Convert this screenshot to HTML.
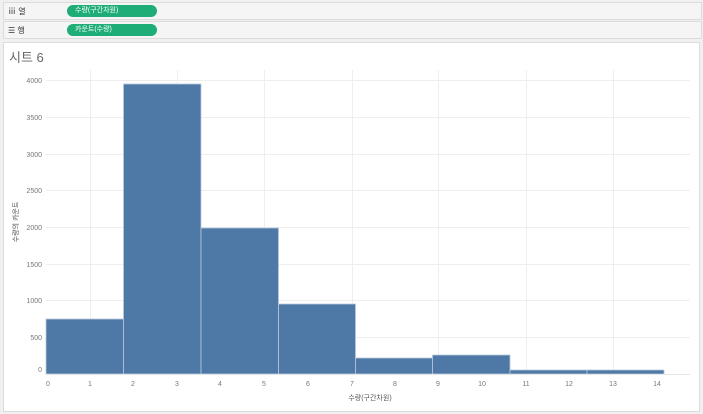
<!DOCTYPE html>
<html><head><meta charset="utf-8"><style>
body{margin:0;width:703px;height:414px;background:#f0f0f0;font-family:"Liberation Sans","Noto Sans CJK KR",sans-serif;overflow:hidden;position:relative}
.shelf{position:absolute;left:3px;width:697px;height:16px;background:#f5f5f5;border:1px solid #dcdcdc}
.lab{position:absolute;left:4px;top:3px;font-size:8px;color:#333}
.pill{position:absolute;left:63px;top:2px;width:90px;height:12px;background:#1fad77;border-radius:7px;color:#fff;font-size:7px;line-height:12px;padding-left:8px;box-sizing:border-box}
.panel{position:absolute;left:3px;top:42px;width:695px;height:368px;background:#fff;border:1px solid #dcdcdc}
</style></head><body>
<div class="shelf" style="top:2px"><span class="lab">ⅲ 열</span><div class="pill">수량(구간차원)</div></div>
<div class="shelf" style="top:21px"><span class="lab">☰ 행</span><div class="pill">카운트(수량)</div></div>
<div class="panel"></div>
<svg style="position:absolute;left:0;top:0" width="703" height="414" font-family="Liberation Sans, Noto Sans CJK KR, sans-serif">
<text x="9" y="62" font-size="13" fill="#666">시트 6</text>
<g stroke="#eeeeee" stroke-width="1">
<line x1="46" x2="690" y1="80.5" y2="80.5"/><line x1="46" x2="690" y1="117.5" y2="117.5"/><line x1="46" x2="690" y1="154.5" y2="154.5"/><line x1="46" x2="690" y1="190.5" y2="190.5"/><line x1="46" x2="690" y1="227.5" y2="227.5"/><line x1="46" x2="690" y1="264.5" y2="264.5"/><line x1="46" x2="690" y1="300.5" y2="300.5"/><line x1="46" x2="690" y1="337.5" y2="337.5"/>
<line x1="90.5" x2="90.5" y1="70" y2="374"/><line x1="177.5" x2="177.5" y1="70" y2="374"/><line x1="264.5" x2="264.5" y1="70" y2="374"/><line x1="352.5" x2="352.5" y1="70" y2="374"/><line x1="438.5" x2="438.5" y1="70" y2="374"/><line x1="526.5" x2="526.5" y1="70" y2="374"/><line x1="613.5" x2="613.5" y1="70" y2="374"/>
</g>
<g fill="#4e79a7" stroke="#b8c9dc" stroke-width="0.8">
<rect x="46" y="319" width="77.5" height="55"/>
<rect x="123.5" y="84" width="77.5" height="290"/>
<rect x="201" y="228" width="77.5" height="146"/>
<rect x="278.5" y="304" width="77" height="70"/>
<rect x="355.5" y="358" width="77" height="16"/>
<rect x="432.5" y="355" width="77.5" height="19"/>
<rect x="510" y="370" width="77" height="4"/>
<rect x="587" y="370" width="77" height="4"/>
</g>
<line x1="46" x2="690" y1="374.5" y2="374.5" stroke="#e6e6e6"/>
<g font-size="7" fill="#777" text-anchor="end">
<text x="42" y="83">4000</text><text x="42" y="120">3500</text><text x="42" y="157">3000</text><text x="42" y="193">2500</text><text x="42" y="230">2000</text><text x="42" y="267">1500</text><text x="42" y="303">1000</text><text x="42" y="340">500</text><text x="42" y="372">0</text>
</g>
<g font-size="7" fill="#777" text-anchor="middle">
<text x="48" y="386">0</text><text x="90" y="386">1</text><text x="133" y="386">2</text><text x="177" y="386">3</text><text x="220" y="386">4</text><text x="264" y="386">5</text><text x="308" y="386">6</text><text x="352" y="386">7</text><text x="395" y="386">8</text><text x="438" y="386">9</text><text x="482" y="386">10</text><text x="526" y="386">11</text><text x="569" y="386">12</text><text x="613" y="386">13</text><text x="657" y="386">14</text>
<text x="370" y="400" fill="#555">수량(구간차원)</text>
<text transform="translate(18,222) rotate(-90)" fill="#555">수량의 카운트</text>
</g>
</svg>
</body></html>
